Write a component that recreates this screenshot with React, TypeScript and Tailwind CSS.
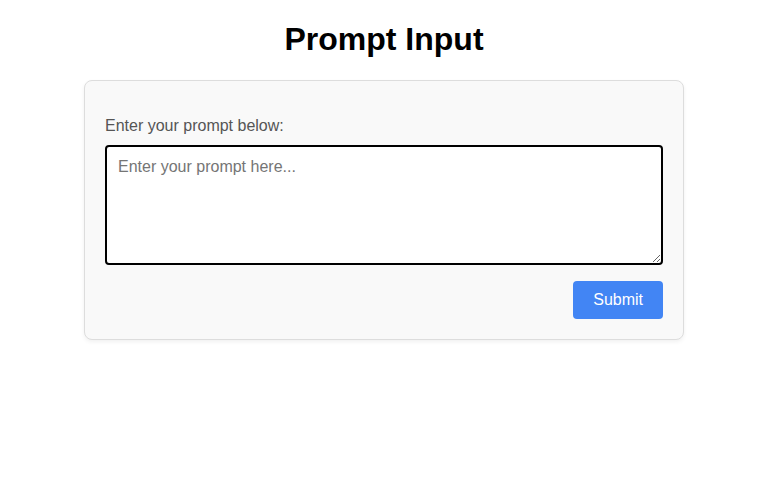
import React from "react";

export default function App() {
  return (
    <div className="min-h-[480px] bg-white" style={{ fontFamily: '"Liberation Sans", Arial, sans-serif' }}>
      <h1 className="text-[32px] font-bold text-center text-black leading-[37px] pt-[21px] pb-[22px]">Prompt Input</h1>
      <div className="mx-auto w-[600px] bg-[#f9f9f9] border border-[#dddddd] rounded-[8px] shadow-[0_2px_4px_rgba(0,0,0,0.06)] px-5 pt-[36px] pb-5">
        <label className="block text-[16px] leading-[18px] text-[#555555] mb-[10px]">Enter your prompt below:</label>
        <textarea
          className="block w-full h-[120px] border-2 border-black rounded-[4px] px-[11px] pt-[11px] pb-[9px] text-[16px] leading-[18px] bg-white text-black placeholder:text-[#757575] outline-none"
          placeholder="Enter your prompt here..."
        />
        <div className="flex justify-end mt-4">
          <button className="bg-[#4285f4] text-white text-[16px] leading-[18px] px-5 py-[10px] rounded-[4px]">Submit</button>
        </div>
      </div>
    </div>
  );
}
